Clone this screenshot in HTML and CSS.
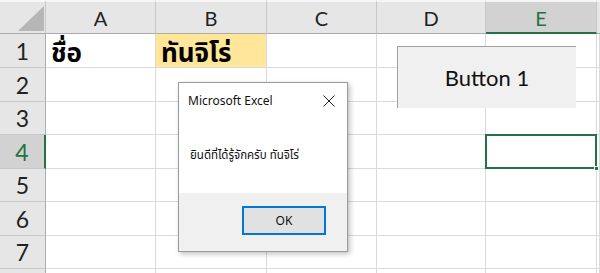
FILE: index.html
```html
<!DOCTYPE html>
<html lang="th">
<head>
<meta charset="utf-8">
<title>Excel</title>
<link rel="stylesheet" href="styles.css">
</head>
<body>
<div class="sheet">
  <div class="corner"><span class="tri"></span></div>
  <div class="ch">A</div>
  <div class="ch">B</div>
  <div class="ch">C</div>
  <div class="ch">D</div>
  <div class="ch sel">E</div>
  <div class="ch end"></div>

  <div class="rh">1</div>
  <div class="c big">ชื่อ</div>
  <div class="c big fill">ทันจิโร่</div>
  <div class="c"></div><div class="c"></div><div class="c"></div><div class="c end"></div>

  <div class="rh">2</div>
  <div class="c"></div><div class="c"></div><div class="c"></div><div class="c"></div><div class="c"></div><div class="c end"></div>

  <div class="rh">3</div>
  <div class="c"></div><div class="c"></div><div class="c"></div><div class="c"></div><div class="c"></div><div class="c end"></div>

  <div class="rh sel">4</div>
  <div class="c"></div><div class="c"></div><div class="c"></div><div class="c"></div><div class="c active"></div><div class="c end"></div>

  <div class="rh">5</div>
  <div class="c"></div><div class="c"></div><div class="c"></div><div class="c"></div><div class="c"></div><div class="c end"></div>

  <div class="rh">6</div>
  <div class="c"></div><div class="c"></div><div class="c"></div><div class="c"></div><div class="c"></div><div class="c end"></div>

  <div class="rh">7</div>
  <div class="c"></div><div class="c"></div><div class="c"></div><div class="c"></div><div class="c"></div><div class="c end"></div>

  <div class="rh last"></div>
  <div class="c last"></div><div class="c last"></div><div class="c last"></div><div class="c last"></div><div class="c last"></div><div class="c last end"></div>

  <div class="formbtn">Button 1</div>

  <div class="dialog">
    <div class="dlg-top">
      <div class="dlg-title">
        <span>Microsoft Excel</span>
        <svg class="close" width="12" height="12" viewBox="0 0 12 12"><path d="M0.5 0.5 L11.5 11.5 M11.5 0.5 L0.5 11.5" stroke="#222" stroke-width="1" fill="none"/></svg>
      </div>
      <div class="dlg-msg">ยินดีที่ได้รู้จักครับ ทันจิโร่</div>
    </div>
    <div class="dlg-foot">
      <div class="ok">OK</div>
    </div>
  </div>
</div>
</body>
</html>
```

FILE: styles.css
```css
html, body {
  margin: 0;
  padding: 0;
  background: #ffffff;
}
.sheet {
  position: relative;
  width: 600px;
  height: 273px;
  overflow: hidden;
  display: grid;
  grid-template-columns: 46px 110px 111px 110px 109px 111px 1fr;
  grid-template-rows: 34px 34px 34px 33px 34px 33px 34px 33px 1fr;
  font-family: Lato, "Noto Sans", sans-serif;
}
.corner {
  position: relative;
  background: #e6e6e6;
  border-right: 1px solid #c8c8c8;
  border-bottom: 1px solid #ababab;
  box-sizing: border-box;
  border-top: 2px solid #f6f6f6;
}
.tri {
  position: absolute;
  right: 1px;
  bottom: 2px;
  width: 0;
  height: 0;
  border-left: 26px solid transparent;
  border-bottom: 25px solid #b6b6b6;
}
.ch {
  background: #e6e6e6;
  border-right: 1px solid #c8c8c8;
  border-bottom: 1px solid #ababab;
  border-top: 2px solid #f6f6f6;
  box-sizing: border-box;
  display: flex;
  align-items: center;
  justify-content: center;
  font-size: 20px;
  color: #222;
  padding-top: 1px;
}
.ch.sel {
  background: #d2d2d2;
  color: #217346;
  border-bottom: 2px solid #217346;
}
.ch.end { border-right: none; }
.rh {
  background: #e6e6e6;
  border-right: 1px solid #ababab;
  border-bottom: 1px solid #c8c8c8;
  box-sizing: border-box;
  display: flex;
  align-items: center;
  justify-content: center;
  font-size: 23px;
  color: #222;
}
.rh.sel {
  background: #d2d2d2;
  color: #217346;
  border-right: 2px solid #217346;
}
.c {
  border-right: 1px solid #dadada;
  border-bottom: 1px solid #dadada;
  box-sizing: border-box;
  background: #fff;
}
.c.last, .rh.last { border-bottom: none; }
.big {
  font-weight: bold;
  font-size: 26px;
  line-height: 1;
  color: #000;
  display: flex;
  align-items: center;
  padding-left: 5px;
  padding-top: 2px;
  font-family: "Noto Sans", "Noto Sans Thai", "Loma", sans-serif;
}
.fill { background: #ffe699; }
.active { position: relative; }
.active::after {
  content: "";
  position: absolute;
  left: -1px;
  top: -1px;
  right: -1px;
  bottom: -1px;
  border: 2px solid #217346;
}
.active::before {
  content: "";
  position: absolute;
  right: -3px;
  bottom: -3px;
  width: 5px;
  height: 5px;
  background: #217346;
  border: 1px solid #fff;
  z-index: 2;
  box-sizing: border-box;
}
.formbtn {
  position: absolute;
  left: 397px;
  top: 46px;
  width: 179px;
  height: 62px;
  box-sizing: border-box;
  background: #f0f0f0;
  border-top: 1px solid #a0a0a0;
  border-left: 1px solid #a0a0a0;
  display: flex;
  align-items: center;
  justify-content: center;
  font-family: Lato, "Noto Sans", sans-serif;
  font-size: 22px;
  color: #111;
}
.dialog {
  position: absolute;
  left: 178px;
  top: 82px;
  width: 170px;
  height: 170px;
  box-sizing: border-box;
  border: 1px solid #9a9a9a;
  display: flex;
  flex-direction: column;
  box-shadow: 2px 2px 5px rgba(0,0,0,0.25);
  font-family: "Noto Sans", "Noto Sans Thai", sans-serif;
  background: #fff;
}
.dlg-top {
  height: 110px;
  background: #fff;
  display: flex;
  flex-direction: column;
}
.dlg-title {
  display: flex;
  justify-content: space-between;
  align-items: center;
  padding: 9px 12px 0 9px;
  font-size: 12px;
  color: #111;
}
.close { display: block; }
.dlg-msg {
  padding: 38px 0 0 11px;
  font-size: 11.5px;
  color: #111;
}
.dlg-foot {
  flex: 1;
  background: #f0f0f0;
  display: flex;
  justify-content: flex-end;
  align-items: flex-start;
  padding: 13px 21px 0 0;
}
.ok {
  width: 84px;
  height: 29px;
  box-sizing: border-box;
  border: 2px solid #0078d7;
  background: #e1e1e1;
  display: flex;
  align-items: center;
  justify-content: center;
  font-size: 12px;
  color: #111;
}
```
